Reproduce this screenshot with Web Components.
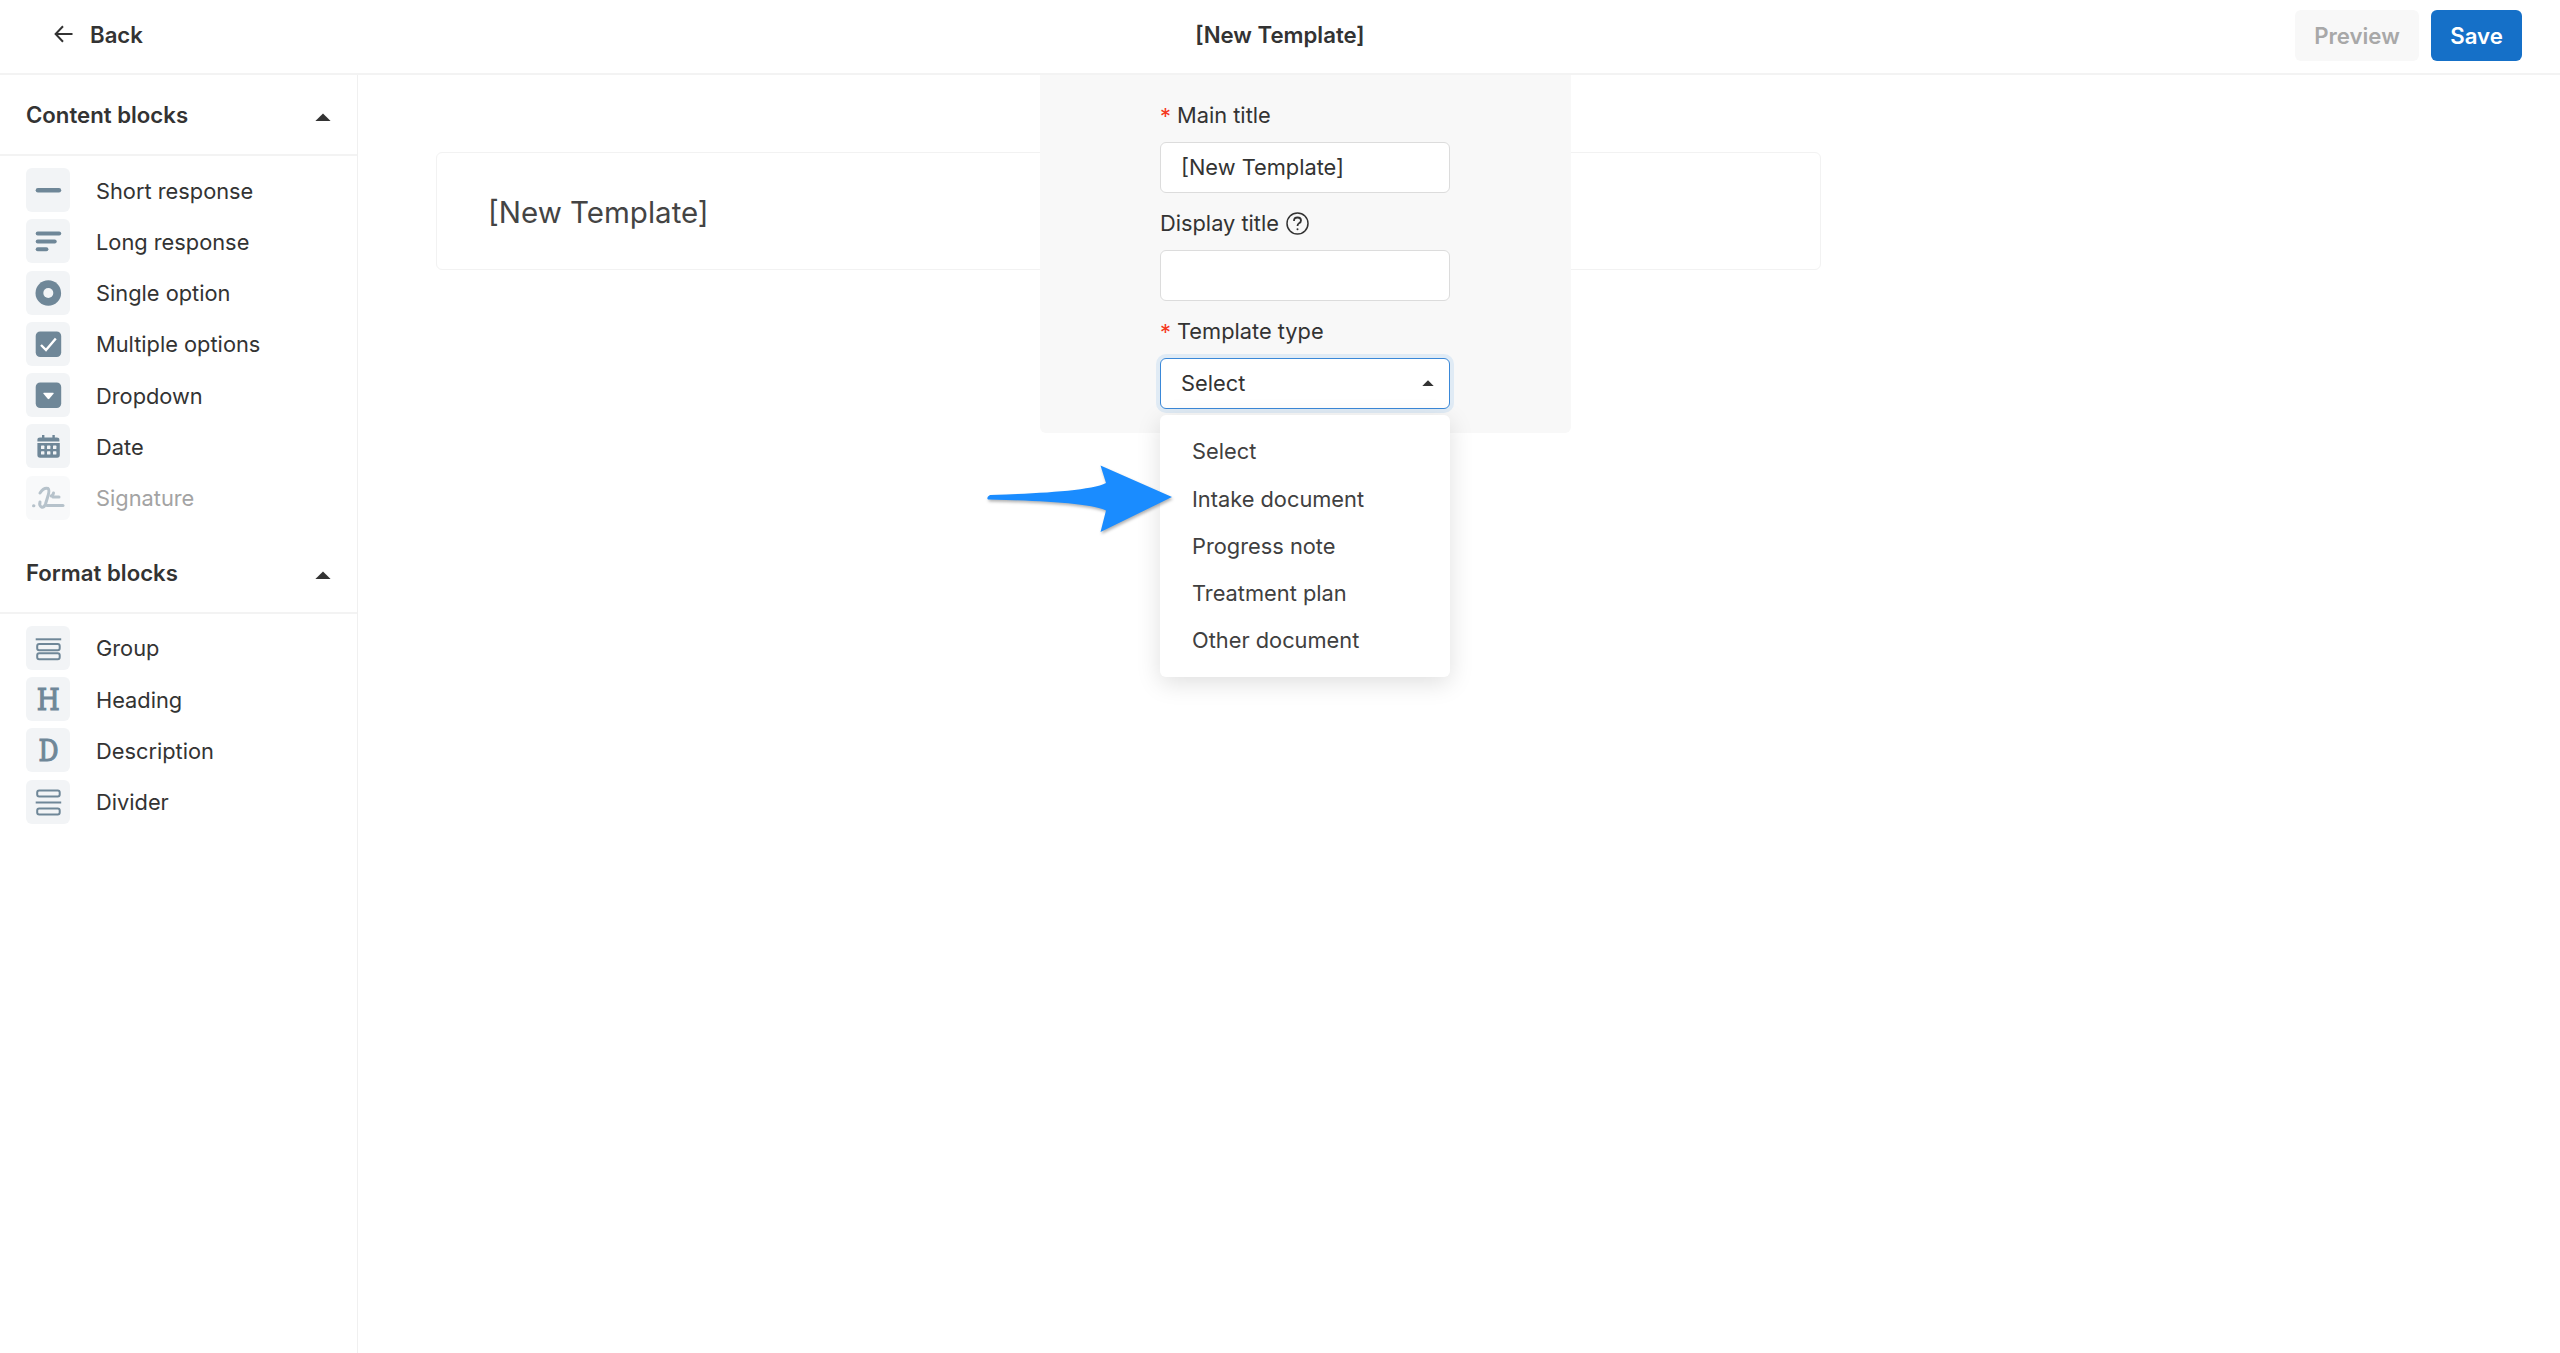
<!DOCTYPE html>
<html>
<head>
<meta charset="utf-8">
<title>New Template</title>
<style>
    html, body { margin: 0; height: 100%; background: #fff; }
    body { font-family: Inter, "Noto Sans", sans-serif; color: #333; }
</style>
</head>
<body>
<builder-page>
    <top-bar slot="top" heading="[New Template]"></top-bar>
    <block-section slot="side" heading="Content blocks">
        <block-item icon="short">Short response</block-item>
        <block-item icon="long">Long response</block-item>
        <block-item icon="single">Single option</block-item>
        <block-item icon="multi">Multiple options</block-item>
        <block-item icon="dropdown">Dropdown</block-item>
        <block-item icon="date">Date</block-item>
        <block-item icon="signature" disabled>Signature</block-item>
    </block-section>
    <block-section slot="side" heading="Format blocks">
        <block-item icon="group">Group</block-item>
        <block-item icon="heading">Heading</block-item>
        <block-item icon="description">Description</block-item>
        <block-item icon="divider">Divider</block-item>
    </block-section>
    <title-card>[New Template]</title-card>
    <settings-panel slot="overlay"></settings-panel>
    <pointer-arrow slot="overlay"></pointer-arrow>
</builder-page>

<script>
const caret = (w, h) => `<svg width="${w}" height="${h}" viewBox="0 0 16 8"><path d="M8 0.4 15.6 8H0.4z" fill="#333"/></svg>`;

class BuilderPage extends HTMLElement {
    connectedCallback() {
        this.attachShadow({ mode: 'open' }).innerHTML = `
        <style>
            :host { display: flex; flex-direction: column; height: 1353px; overflow: hidden; }
            .body { flex: 1; display: flex; min-height: 0; }
            aside { width: 357px; border-right: 1px solid #f0f0f0; }
            main { flex: 1; position: relative; padding: 77px 0 0 78px; }
        </style>
        <slot name="top"></slot>
        <div class="body">
            <aside><slot name="side"></slot></aside>
            <main><slot></slot><slot name="overlay"></slot></main>
        </div>`;
    }
}

class TopBar extends HTMLElement {
    connectedCallback() {
        this.attachShadow({ mode: 'open' }).innerHTML = `
        <style>
            :host { display: grid; grid-template-columns: 1fr auto 1fr; align-items: center; height: 71px; padding-bottom: 2px; border-bottom: 2px solid #f3f3f3; font-size: 22.2px; font-weight: 600; color: #333; }
            .back { display: flex; align-items: center; gap: 17px; padding-left: 54px; margin-top: -3px; }
            .title { margin-top: -3px; }
            .actions { display: flex; justify-content: flex-end; gap: 12px; padding-right: 38px; }
            .btn { height: 51px; line-height: 51px; border-radius: 6px; text-align: center; }
            .preview { width: 124px; background: #f8f8f8; color: #a8a8a8; }
            .save { width: 91px; background: #1570c8; color: #fff; }
            svg { display: block; }
        </style>
        <div class="back">
            <svg width="19" height="18" viewBox="0 0 19 18" fill="none" stroke="#333" stroke-width="2"><path d="M18.5 9H1.8M9 1.2 1.6 9 9 16.8"/></svg>
            <span>Back</span>
        </div>
        <div class="title">${this.getAttribute('heading')}</div>
        <div class="actions"><div class="btn preview">Preview</div><div class="btn save">Save</div></div>`;
    }
}

class BlockSection extends HTMLElement {
    connectedCallback() {
        this.attachShadow({ mode: 'open' }).innerHTML = `
        <style>
            :host { display: block; }
            .head { display: flex; align-items: center; justify-content: space-between; height: 79px; padding: 0 26px; border-bottom: 2px solid #f3f3f3; font-size: 22.2px; font-weight: 600; color: #333; }
            .head svg { margin-top: 5px; }
            .list { display: flex; flex-direction: column; gap: 7.3px; padding: 12px 0 13px 26px; }
        </style>
        <div class="head"><span>${this.getAttribute('heading')}</span>${caret(16, 8)}</div>
        <div class="list"><slot></slot></div>`;
    }
}

const c = '#6f8798';
const blockIcons = {
    short: `<rect x="9.7" y="20" width="25.5" height="4.4" rx="2.2" fill="${c}"/>`,
    long: `<rect x="9.7" y="12.6" width="25.5" height="4" rx="2" fill="${c}"/><rect x="9.7" y="20.4" width="21" height="4" rx="2" fill="${c}"/><rect x="9.7" y="28.2" width="12.7" height="4" rx="2" fill="${c}"/>`,
    single: `<circle cx="22.3" cy="22" r="12.8" fill="${c}"/><circle cx="22.3" cy="22" r="5" fill="#f2f4f6"/>`,
    multi: `<rect x="9.7" y="9.5" width="25.5" height="25.5" rx="4.5" fill="${c}"/><path d="M15 23l5 5 9.8-11.5" fill="none" stroke="#fff" stroke-width="2.4"/>`,
    dropdown: `<rect x="9.7" y="9.5" width="25.5" height="25.5" rx="4.5" fill="${c}"/><path d="M18 19.8h9q1.2 0 .5 1l-4.2 5q-.8.9-1.6 0l-4.2-5q-.7-1 .5-1z" fill="#fff"/>`,
    date: `<path d="M16 11h2.4v2.4h8V11h2.4v2.4h2q2.6 0 2.6 2.4v1.6H11.4v-1.6q0-2.4 2.6-2.4h2z" fill="${c}"/><path d="M11.4 19h22.4v12q0 2.7-2.7 2.7H14.1q-2.7 0-2.7-2.7z" fill="${c}"/><g fill="#f2f4f6"><rect x="15" y="21.6" width="3.4" height="3.4" rx=".6"/><rect x="21" y="21.6" width="3.4" height="3.4" rx=".6"/><rect x="27" y="21.6" width="3.4" height="3.4" rx=".6"/><rect x="15" y="27.2" width="3.4" height="3.4" rx=".6"/><rect x="21" y="27.2" width="3.4" height="3.4" rx=".6"/><rect x="27" y="27.2" width="3.4" height="3.4" rx=".6"/></g>`,
    signature: `<g fill="none" stroke="${c}" stroke-width="3" stroke-linecap="round" stroke-linejoin="round"><path d="M14 17q4-6 8-4.500 2 1.500-.5 9l-2 6.500q-1.500 4-4 3-2.500-1.500-1.500-5"/><path d="M25 20q2-.5 2.500-3M27 21h6"/><path d="M21 29.500h16"/><path d="M7.500 29.800h.4"/></g>`,
    group: `<g fill="none" stroke="${c}"><path d="M9.7 13.300h25.500" stroke-width="2"/><rect x="11.2" y="18" width="22.500" height="6.2" rx="2" stroke-width="2"/><rect x="11.2" y="27.3" width="22.500" height="6" rx="2" stroke-width="2"/></g>`,
    heading: `<text x="22.3" y="33" text-anchor="middle" font-family="DejaVu Serif" font-size="30" textLength="23" lengthAdjust="spacingAndGlyphs" fill="${c}" stroke="${c}" stroke-width="1.2">H</text>`,
    description: `<text x="22.5" y="33" text-anchor="middle" font-family="DejaVu Serif" font-size="30" textLength="20" lengthAdjust="spacingAndGlyphs" fill="${c}" stroke="${c}" stroke-width="1.2">D</text>`,
    divider: `<g fill="none" stroke="${c}" stroke-width="2"><rect x="11.2" y="10.5" width="22.500" height="6" rx="2"/><path d="M9.7 22.500h25.500"/><rect x="11.2" y="28.5" width="22.500" height="6" rx="2"/></g>`
};

class BlockItem extends HTMLElement {
    connectedCallback() {
        this.attachShadow({ mode: 'open' }).innerHTML = `
        <style>
            :host { display: flex; align-items: center; gap: 26px; font-size: 21.8px; color: #333; }
            :host([disabled]) { color: #a3a3a3; }
            .tile { width: 44px; height: 44px; border-radius: 6px; background: #f2f4f6; }
            :host([disabled]) .tile { opacity: .5; }
            svg { display: block; }
            span { margin-top: 1px; }
        </style>
        <div class="tile"><svg width="44" height="44" viewBox="0 0 44 44">${blockIcons[this.getAttribute('icon')]}</svg></div>
        <span><slot></slot></span>`;
    }
}

class TitleCard extends HTMLElement {
    connectedCallback() {
        this.attachShadow({ mode: 'open' }).innerHTML = `
        <style>
            :host { display: flex; align-items: center; box-sizing: border-box; width: 1385px; height: 118px; padding: 2px 0 0 51px; border: 1px solid #f2f2f2; border-radius: 6px; font-size: 29.5px; color: #444; }
        </style>
        <slot></slot>`;
    }
}

class FormField extends HTMLElement {
    connectedCallback() {
        this.attachShadow({ mode: 'open' }).innerHTML = `
        <style>
            :host { display: block; position: relative; font-size: 21.8px; color: #333; }
            .label { display: flex; align-items: center; height: 34px; margin-bottom: 10px; }
            .star { color: #f5371c; width: 17px; flex: none; margin-top: 1px; }
            .help { margin-left: 7px; display: block; }
            .control { box-sizing: border-box; display: flex; align-items: center; justify-content: space-between; height: 51px; padding: 0 15px 1px 20px; background: #fff; border: 1px solid #dcdcdc; border-radius: 6px; }
            :host([focused]) .control { border: 1.5px solid #3a88d8; box-shadow: 0 0 0 4px #e0ebf5; }
        </style>
        <div class="label">
            ${this.hasAttribute('required') ? '<span class="star">*</span>' : ''}
            <span>${this.getAttribute('label')}</span>
            ${this.hasAttribute('help') ? `<svg class="help" width="23" height="23" viewBox="0 0 23 23" fill="none" stroke="#333" stroke-width="1.5"><circle cx="11.5" cy="11.5" r="10.5"/><path d="M8 9q0-3.5 3.5-3.5 3.5 0 3.5 3 0 1.800-2 2.800-1.500.8-1.500 2.700" stroke-width="1.8"/><circle cx="11.5" cy="17.2" r="1" fill="#333" stroke="none"/></svg>` : ''}
        </div>
        <div class="control"><span>${this.getAttribute('value') || ''}</span>${this.hasAttribute('focused') ? caret(12, 6) : ''}</div>
        <slot></slot>`;
    }
}

class SelectMenu extends HTMLElement {
    connectedCallback() {
        const items = this.getAttribute('items').split('|');
        this.attachShadow({ mode: 'open' }).innerHTML = `
        <style>
            :host { display: block; position: absolute; left: 0; right: 0; top: calc(100% + 6px); z-index: 2; padding: 13px 0 14px; background: #fff; border-radius: 6px; box-shadow: 0 6px 24px rgba(0,0,0,.13); font-size: 21.8px; color: #404040; }
            div { height: 47px; line-height: 47px; padding-left: 32px; }
            div + div { position: relative; top: .7px; }
        </style>
        ${items.map(i => `<div>${i}</div>`).join('')}`;
    }
}

class SettingsPanel extends HTMLElement {
    connectedCallback() {
        this.attachShadow({ mode: 'open' }).innerHTML = `
        <style>
            :host { display: flex; flex-direction: column; gap: 13px; position: absolute; left: 682px; top: 0; box-sizing: border-box; width: 531px; height: 358px; padding: 23px 121px 0 120px; background: #f8f8f8; border-radius: 0 0 6px 6px; }
        </style>
        <form-field required label="Main title" value="[New Template]"></form-field>
        <form-field help label="Display title"></form-field>
        <form-field required focused label="Template type" value="Select">
            <select-menu items="Select|Intake document|Progress note|Treatment plan|Other document"></select-menu>
        </form-field>`;
    }
}

class PointerArrow extends HTMLElement {
    connectedCallback() {
        this.attachShadow({ mode: 'open' }).innerHTML = `
        <style>
            :host { display: block; position: absolute; left: 628px; top: 389px; z-index: 3; width: 190px; height: 74px; }
            svg { display: block; filter: drop-shadow(1px 2px 1.5px rgba(0,0,0,.3)); }
        </style>
        <svg width="190" height="74" viewBox="0 0 190 74">
            <path d="M2 32.500 C1 34 1 35.500 3 35.500 C50 36.500 105 39 120 46.500 L114.500 68 L186 33 L114.500 1.500 L120 19 C105 27 50 29.500 4 31 Z" fill="#1a8cff"/>
        </svg>`;
    }
}

customElements.define('builder-page', BuilderPage);
customElements.define('top-bar', TopBar);
customElements.define('block-section', BlockSection);
customElements.define('block-item', BlockItem);
customElements.define('title-card', TitleCard);
customElements.define('form-field', FormField);
customElements.define('select-menu', SelectMenu);
customElements.define('settings-panel', SettingsPanel);
customElements.define('pointer-arrow', PointerArrow);
</script>
</body>
</html>
